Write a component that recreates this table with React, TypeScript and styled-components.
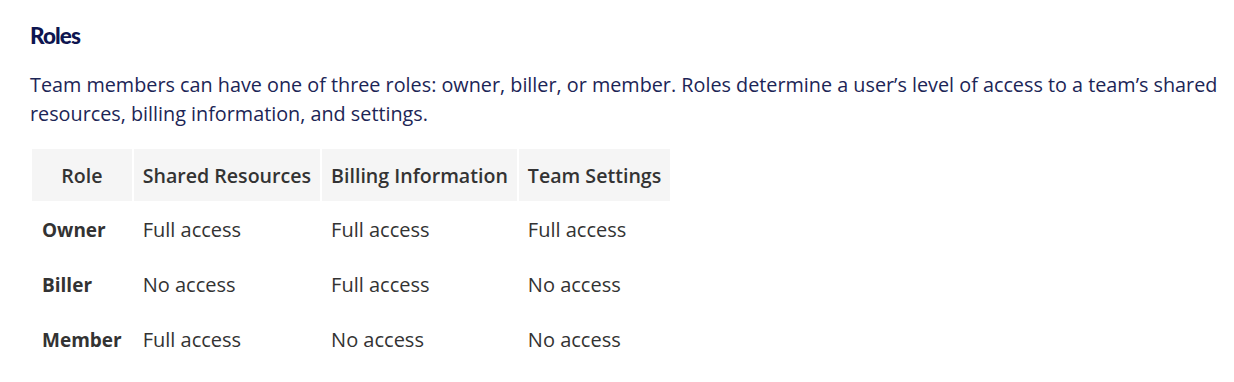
import styled, { createGlobalStyle } from 'styled-components';

const GlobalStyle = createGlobalStyle`
  body {
    margin: 0;
    background: #ffffff;
    font-family: "Open Sans", "Noto Sans", sans-serif;
  }
`;

const Section = styled.section`
  padding: 22px 12px 0 30px;
`;

const Title = styled.h3`
  margin: 0;
  font-family: Lato, "Open Sans", sans-serif;
  font-size: 22.5px;
  font-weight: 900;
  letter-spacing: -0.9px;
  color: #0d1550;
  line-height: 28px;
`;

const Lead = styled.p`
  margin: 20px 0 19px 0;
  font-size: 19.8px;
  line-height: 29px;
  color: #1c2556;
`;

const Table = styled.table`
  border-collapse: separate;
  border-spacing: 2px;
  font-size: 20px;
  color: #333333;
`;

const HeadCell = styled.th`
  background: #f5f5f5;
  height: 52px;
  padding: 0 9px;
  font-size: 19.6px;
  font-weight: 600;
  text-align: center;
  white-space: nowrap;
`;

const RoleCell = styled.td`
  height: 53px;
  padding: 0 10px;
  font-size: 19px;
  font-weight: 700;
  white-space: nowrap;
`;

const Cell = styled.td`
  height: 53px;
  padding: 0 9px;
  white-space: nowrap;
`;

const columns = ['Role', 'Shared Resources', 'Billing Information', 'Team Settings'];

const rows = [
  { role: 'Owner', access: ['Full access', 'Full access', 'Full access'] },
  { role: 'Biller', access: ['No access', 'Full access', 'No access'] },
  { role: 'Member', access: ['Full access', 'No access', 'No access'] },
];

export default function App() {
  return (
    <>
      <GlobalStyle />
      <Section>
        <Title>Roles</Title>
        <Lead>
          Team members can have one of three roles: owner, biller, or member. Roles determine a user’s level of access to a team’s shared
          resources, billing information, and settings.
        </Lead>
        <Table>
          <thead>
            <tr>
              {columns.map((c) => <HeadCell key={c}>{c}</HeadCell>)}
            </tr>
          </thead>
          <tbody>
            {rows.map((r) => (
              <tr key={r.role}>
                <RoleCell>{r.role}</RoleCell>
                {r.access.map((a, i) => <Cell key={i}>{a}</Cell>)}
              </tr>
            ))}
          </tbody>
        </Table>
      </Section>
    </>
  );
}
